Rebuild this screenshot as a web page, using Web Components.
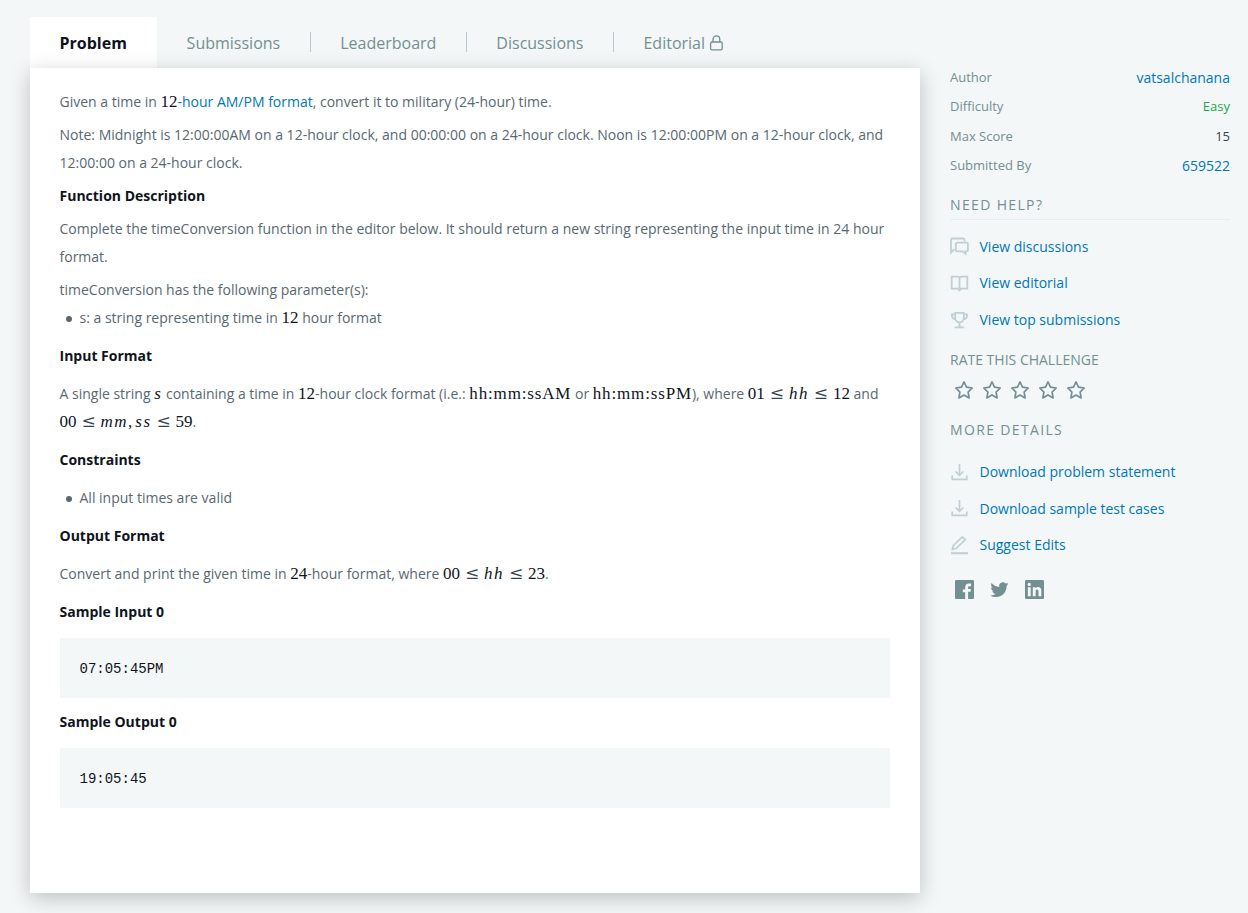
<!DOCTYPE html>
<html><head><meta charset="utf-8"><title>Time Conversion</title>
<style>
html,body{margin:0;padding:0;height:913px;overflow:hidden;background:#f3f7f7;font-family:"Open Sans","Noto Sans",sans-serif;font-size:14px;color:#576871}
</style></head><body>
<hr-app>
<hr-tabs slot="tabs">
<hr-tab active>Problem</hr-tab><hr-tab divider>Submissions</hr-tab><hr-tab divider>Leaderboard</hr-tab><hr-tab divider>Discussions</hr-tab>
<hr-tab>Editorial <svg width="15" height="16" viewBox="0 0 15 16" fill="none" stroke="#738f93" stroke-width="1.3" style="vertical-align:-2px"><rect x="1.6" y="7" width="11.6" height="7.8" rx="1.4"/><path d="M4 7V4.3a3.4 3.4 0 0 1 6.8 0V7"/></svg></hr-tab>
</hr-tabs>
<hr-card slot="card">
<hr-p>Given a time in <hr-m>12</hr-m><a>-hour AM/PM format</a>, convert it to military (24-hour) time.</hr-p>
<hr-p>Note: Midnight is 12:00:00AM on a 12-hour clock, and 00:00:00 on a 24-hour clock. Noon is 12:00:00PM on a 12-hour clock, and 12:00:00 on a 24-hour clock.</hr-p>
<hr-h gap="5">Function Description</hr-h>
<hr-p>Complete the timeConversion function in the editor below. It should return a new string representing the input time in 24 hour format.</hr-p>
<hr-p>timeConversion has the following parameter(s):</hr-p>
<hr-li gap="0">s: a string representing time in <hr-m>12</hr-m> hour format</hr-li>
<hr-h>Input Format</hr-h>
<hr-p gap="10">A single string <hr-m><i>s</i></hr-m> containing a time in <hr-m>12</hr-m>-hour clock format (i.e.: <hr-m wide>hh:mm:ssAM</hr-m> or <hr-m wide>hh:mm:ssPM</hr-m>), where <hr-m>01<u>≤</u><i>hh</i><u>≤</u>12</hr-m> and <hr-m>00<u>≤</u><i>mm</i>,<i class="sp">ss</i><u>≤</u>59</hr-m>.</hr-p>
<hr-h>Constraints</hr-h>
<hr-li gap="10">All input times are valid</hr-li>
<hr-h>Output Format</hr-h>
<hr-p gap="10">Convert and print the given time in <hr-m>24</hr-m>-hour format, where <hr-m>00<u>≤</u><i>hh</i><u>≤</u>23</hr-m>.</hr-p>
<hr-h>Sample Input 0</hr-h>
<hr-pre>07:05:45PM</hr-pre>
<hr-h>Sample Output 0</hr-h>
<hr-pre>19:05:45</hr-pre>
</hr-card>
<hr-side slot="side">
<hr-stat label="Author" tone="link">vatsalchanana</hr-stat>
<hr-stat label="Difficulty" tone="easy">Easy</hr-stat>
<hr-stat label="Max Score" tone="dark">15</hr-stat>
<hr-stat label="Submitted By" tone="link">659522</hr-stat>
<hr-head rule style="margin-top:15px">NEED HELP?</hr-head>
<hr-link icon="chat" style="margin-top:8.7px">View discussions</hr-link>
<hr-link icon="book" style="margin-top:-.5px">View editorial</hr-link>
<hr-link icon="trophy" style="margin-top:.5px">View top submissions</hr-link>
<hr-head plain style="margin-top:12.05px">RATE THIS CHALLENGE</hr-head>
<hr-stars></hr-stars>
<hr-head style="margin-top:15.5px">MORE DETAILS</hr-head>
<hr-link icon="down" style="margin-top:13.75px">Download problem statement</hr-link>
<hr-link icon="down">Download sample test cases</hr-link>
<hr-link icon="edit">Suggest Edits</hr-link>
<hr-social></hr-social>
</hr-side>
</hr-app>
<script>
function def(name, css, html){
  customElements.define(name, class extends HTMLElement{
    connectedCallback(){
      if(this.shadowRoot) return;
      const r=this.attachShadow({mode:'open'});
      r.innerHTML='<style>'+css+'</style>'+(typeof html==='function'?html(this):html);
    }
  });
}
def('hr-app',`:host{display:grid;grid-template-columns:890px 280px;column-gap:30px;grid-template-rows:51px 825px;padding:17px 0 0 30px;width:1200px}
.t{grid-column:1}.c{grid-column:1;grid-row:2}.s{grid-column:2;grid-row:1/3;padding-top:45.4px}`,
`<div class="t"><slot name="tabs"></slot></div><div class="c"><slot name="card"></slot></div><div class="s"><slot name="side"></slot></div>`);
def('hr-tabs',`:host{display:flex;height:51px;align-items:stretch}`,`<slot></slot>`);
def('hr-tab',`:host{display:flex;align-items:center;padding:0 30px;font-size:16px;line-height:24px;color:#738f93;position:relative;white-space:pre}
:host([active]){box-sizing:border-box;width:127px;background:#fff;color:#0e141e;font-weight:700;padding:0 0 0 29.5px;margin-right:-.4px}
:host([divider])::after{content:"";position:absolute;right:-1px;top:15px;height:20px;width:1px;background:#b7c9cc}`,`<slot></slot>`);
def('hr-card',`:host{display:block;box-sizing:border-box;height:825px;background:#fff;padding:20px 30px 0 29.5px;box-shadow:0 5px 20px rgba(0,0,0,.22);position:relative}`,`<slot></slot>`);
def('hr-p',`:host{display:block;line-height:28px;margin-top:5px;color:#576871}
:host([gap="10"]){margin-top:10px}
:host(:first-child){margin-top:0}
::slotted(a){color:#0077b5;text-decoration:none}`,`<slot></slot>`);
def('hr-h',`:host{display:block;line-height:28px;margin-top:10px;font-weight:700;color:#0e141e}
:host([gap="5"]){margin-top:5px}`,`<slot></slot>`);
def('hr-li',`:host{display:block;position:relative;line-height:28px;padding-left:20px;color:#576871}
:host([gap="10"]){margin-top:10px}
:host::before{content:"";position:absolute;left:6.5px;top:11.5px;width:6px;height:6px;border-radius:50%;background:#576871}`,`<slot></slot>`);
def('hr-m',`:host{display:inline-block;white-space:nowrap;line-height:1;font-family:"Liberation Serif","Times New Roman",serif;font-size:17px;color:#0e141e}
:host([wide]){letter-spacing:.85px}
::slotted(u){text-decoration:none;font-family:"DejaVu Serif",serif;font-size:17px;font-weight:400;color:#39424e;padding:0 4.9px}
::slotted(i){letter-spacing:1.5px}
::slotted(i.sp){margin-left:3px}`,`<slot></slot>`);
def('hr-pre',`:host{display:block;box-sizing:border-box;height:60px;margin:12px 0 0 .5px;background:#f3f7f7;padding:0 19.5px;font-family:"Liberation Mono",monospace;font-size:14px;line-height:62px;color:#0e141e}`,`<slot></slot>`);
def('hr-side',`:host{display:block}`,`<slot></slot>`);
def('hr-stat',`:host{display:flex;justify-content:space-between;align-items:center;height:29.33px;font-size:13px;color:#738f93}
.v{font-size:14px}
:host([tone=link]) .v{color:#0077b5}
:host([tone=easy]) .v{color:#1ba94c;font-size:13px}
:host([tone=dark]) .v{color:#39424e;font-size:13px}`,
h=>`<span>${h.getAttribute('label')}</span><span class="v"><slot></slot></span>`);
def('hr-head',`:host{display:block;font-size:14px;line-height:20px;letter-spacing:1.35px;color:#738f93}
:host([plain]){letter-spacing:0}
:host([rule]){padding-bottom:4px;border-bottom:1px solid #e7eeef}`,`<slot></slot>`);
const ICONS={
chat:`<path d="M14.5 4.500V2.800c0-.8-.5-1.300-1.300-1.300H2.300C1.500 1.500 1 2 1 2.800v12.700l3.400-3.300" fill="none" stroke-width="1.800"/><path d="M7 5.700h9.700c.7 0 1.200.5 1.200 1.200v6.300c0 .7-.5 1.200-1.200 1.200h-1.200v2.400l-2.700-2.400H7c-.7 0-1.200-.5-1.200-1.200V6.900c0-.7.5-1.200 1.200-1.200z" fill="none" stroke-width="1.800"/>`,
book:`<path d="M1.700 3.600h5.800c1 0 2 .6 2 1.700 0-1.100 1-1.700 2-1.700h5.800v12h-6.300l-1.500 1.700-1.500-1.700H1.700zM9.500 5.300v10.300" fill="none" stroke-width="1.800"/>`,
trophy:`<path d="M5.200 2.800h8.600v5.300a4.300 4.300 0 0 1-8.600 0zM5.200 4.300H2v1.500c0 2 1.400 3.300 3.600 3.500M13.800 4.300H17v1.500c0 2-1.400 3.300-3.600 3.500M9.500 12.500v4.500M4.800 17.300h9.400" fill="none" stroke-width="1.800"/>`,
down:`<path d="M9.500 2v11.200M5.600 9.500l3.900 3.900 3.900-3.900M2.200 13.500v3.800h14.600v-3.800" fill="none" stroke-width="1.700"/>`,
edit:`<path d="M2.400 14.300l.8-3.700L12.300 1.800l3 2.900-9.200 8.800z" fill="none" stroke-width="1.600"/><path d="M1 18.200h17" fill="none" stroke-width="2"/>`};
def('hr-link',`:host{display:flex;align-items:center;height:36.5px;font-size:14px;color:#0077b5}
svg{width:20px;height:20px;margin-right:9.5px;stroke:#bfcfd3;flex:none}`,
h=>`<svg viewBox="0 0 20 20">${ICONS[h.getAttribute('icon')]}</svg><slot></slot>`);
const star=`<svg width="20" height="20" viewBox="0 0 20 20"><path d="M10 1.900l2.500 5.300 5.700.8-4.100 4.100 1 5.800-5.100-2.800-5.100 2.800 1-5.800L1.800 8l5.700-.8z" fill="none" stroke="#738f93" stroke-width="1.700" stroke-linejoin="round"/></svg>`;
def('hr-stars',`:host{display:flex;gap:8px;padding:10.5px 0 0 3.5px;height:24px}svg{display:block}`,star.repeat(5));
def('hr-social',`:host{display:flex;gap:16px;align-items:center;padding:17px 0 0 5px}svg{display:block;width:19px;height:19px;fill:#738f93}`,
`<svg viewBox="0 0 20 20"><path d="M1.400 0h17.200C19.400 0 20 .6 20 1.400v17.200c0 .8-.6 1.400-1.400 1.400h-4.800v-7.600h2.600l.4-3h-3V8c0-.9.3-1.400 1.500-1.400h1.600V3.900c-.3 0-1.200-.1-2.300-.1-2.300 0-3.900 1.400-3.900 4v2.100H8.200v3h2.500V20H1.400C.6 20 0 19.400 0 18.600V1.400C0 .6.6 0 1.400 0z"/></svg>
<svg viewBox="0 0 20 20"><path d="M19.500 4.300c-.7.3-1.500.5-2.200.6.8-.5 1.400-1.200 1.700-2.100-.8.4-1.600.8-2.500.9a3.900 3.900 0 0 0-6.700 3.600C6.500 7.100 3.600 5.500 1.700 3.100c-1 1.800-.5 4 1.200 5.200-.6 0-1.200-.2-1.800-.5 0 1.900 1.300 3.500 3.100 3.900-.6.2-1.200.2-1.800.1.500 1.600 2 2.700 3.700 2.700-1.700 1.300-3.800 1.900-5.800 1.700 1.700 1.100 3.800 1.800 6 1.800 7.300 0 11.400-6.200 11.100-11.700.8-.6 1.500-1.200 2-2z"/></svg>
<svg viewBox="0 0 20 20"><path fill-rule="evenodd" d="M1.400 0h17.200C19.400 0 20 .6 20 1.400v17.200c0 .8-.6 1.400-1.400 1.400H1.400C.6 20 0 19.400 0 18.600V1.400C0 .6.6 0 1.400 0zM3 7.600V17h3V7.600zM4.500 3a1.700 1.700 0 1 0 0 3.400 1.700 1.700 0 0 0 0-3.400zM8.200 7.600V17h3v-4.900c0-1.300.5-2.100 1.600-2.100s1.400.8 1.400 2.100V17h3v-5.600c0-2.700-1.300-4-3.300-4-1.400 0-2.300.6-2.800 1.400V7.600z"/></svg>`);
</script>
</body></html>
